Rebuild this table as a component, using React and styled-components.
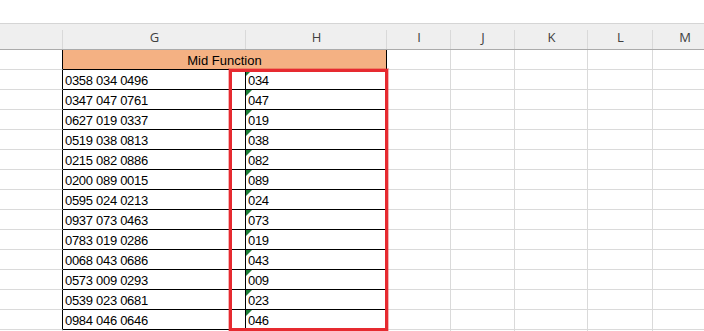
import React from 'react';
import styled, { createGlobalStyle, css } from 'styled-components';

const GlobalStyle = createGlobalStyle`
  html, body {
    margin: 0;
    padding: 0;
    background: #fff;
  }
  body {
    font-family: "Liberation Sans", Arial, sans-serif;
  }
`;

const columns = ['', 'G', 'H', 'I', 'J', 'K', 'L', 'M'];
const widths = '63px 183px 141px 64px 64px 73px 65px 64px';

const rows = [
  ['0358 034 0496', '034'],
  ['0347 047 0761', '047'],
  ['0627 019 0337', '019'],
  ['0519 038 0813', '038'],
  ['0215 082 0886', '082'],
  ['0200 089 0015', '089'],
  ['0595 024 0213', '024'],
  ['0937 073 0463', '073'],
  ['0783 019 0286', '019'],
  ['0068 043 0686', '043'],
  ['0573 009 0293', '009'],
  ['0539 023 0681', '023'],
  ['0984 046 0646', '046'],
];

const Page = styled.div`
  width: 704px;
  height: 331px;
  overflow: hidden;
`;

const TopBar = styled.div`
  height: 23px;
  background: #fff;
`;

const Sheet = styled.div`
  position: relative;
  width: 760px;
`;

const HeaderRow = styled.div`
  display: grid;
  grid-template-columns: ${widths};
  height: 27px;
  box-sizing: border-box;
  background: #efefef;
  border-top: 1px solid #d5d5d5;
  border-bottom: 1px solid #ababab;
`;

const ColHead = styled.div`
  position: relative;
  display: flex;
  align-items: flex-end;
  justify-content: center;
  padding-bottom: 3px;
  box-sizing: border-box;
  font-family: "Open Sans", "Noto Sans", sans-serif;
  font-size: 13px;
  line-height: 17px;
  color: #404040;

  &::after {
    content: '';
    position: absolute;
    right: 0;
    top: 6px;
    bottom: 0;
    width: 1px;
    background: #d9d9d9;
  }
`;

const Row = styled.div`
  display: grid;
  grid-template-columns: ${widths};
  height: 20px;
`;

const Cell = styled.div`
  position: relative;
  display: flex;
  align-items: flex-end;
  box-sizing: border-box;
  padding: 0 2px 1px;
  border-right: 1px solid #dadada;
  border-bottom: 1px solid #dadada;
  font-size: 13px;
  line-height: 15px;
  letter-spacing: -0.3px;
  color: #000;
  white-space: nowrap;
  overflow: hidden;

  ${props => props.$edge && css`
    border-right-color: #000;
  `}

  ${props => props.$boxed && css`
    border-right-color: #000;
    border-bottom-color: #000;
  `}

  ${props => props.$heading && css`
    grid-column: span 2;
    justify-content: center;
    background: #f4b183;
    letter-spacing: 0;
  `}

  ${props => props.$flagged && css`
    &::before {
      content: '';
      position: absolute;
      left: 0;
      top: 0;
      border-top: 6px solid #1a7f37;
      border-right: 6px solid transparent;
    }
  `}
`;

const Highlight = styled.div`
  position: absolute;
  left: 229px;
  top: 46px;
  width: 159px;
  height: 262px;
  box-sizing: border-box;
  border: 3px solid #e62a30;
  box-shadow: 0 0 0 1px rgba(230, 42, 48, 0.35);
  pointer-events: none;
`;

const blanks = ['I', 'J', 'K', 'L', 'M'];

export default function App() {
  return (
    <Page>
      <GlobalStyle />
      <TopBar />
      <Sheet>
        <HeaderRow>
          {columns.map(c => (
            <ColHead key={c || 'F'}>{c}</ColHead>
          ))}
        </HeaderRow>
        <Row>
          <Cell $edge />
          <Cell $heading $boxed>Mid Function</Cell>
          {blanks.map(b => <Cell key={b} />)}
        </Row>
        {rows.map(([full, mid]) => (
          <Row key={full}>
            <Cell $edge />
            <Cell $boxed>{full}</Cell>
            <Cell $boxed $flagged>{mid}</Cell>
            {blanks.map(b => <Cell key={b} />)}
          </Row>
        ))}
        <Row>
          <Cell />
          <Cell />
          <Cell />
          {blanks.map(b => <Cell key={b} />)}
        </Row>
        <Highlight />
      </Sheet>
    </Page>
  );
}
